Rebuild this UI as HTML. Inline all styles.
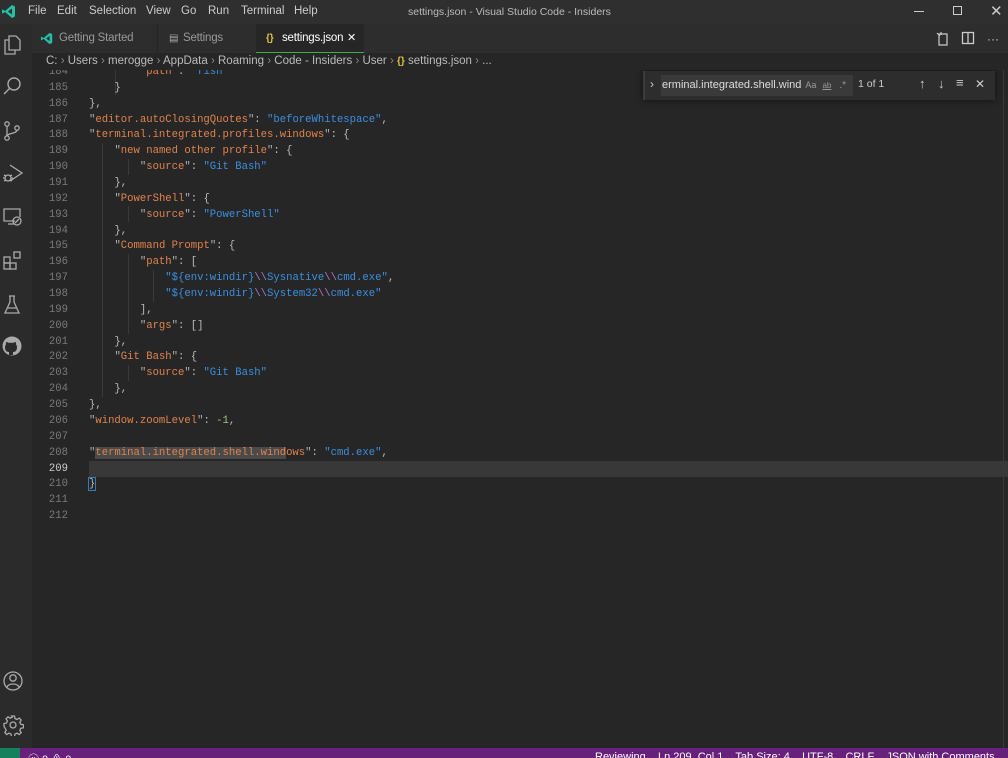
<!DOCTYPE html>
<html><head><meta charset="utf-8"><style>
*{margin:0;padding:0;box-sizing:border-box}
body{width:1008px;height:758px;background:#262626;overflow:hidden;position:relative;font-family:"Liberation Sans",sans-serif;color:#ccc}
.abs{position:absolute}
#title{left:0;top:0;width:1008px;height:24px;background:#2f2f2f;font-size:11.5px}
#title span{position:absolute;top:5px;color:#ccc}
#act{left:0;top:24px;width:32px;height:724px;background:#2b2b2b}
#tabs{left:32px;top:24px;width:976px;height:29px;background:#2d2d2d}
.tab{position:absolute;top:0;height:29px;font-size:11.5px;line-height:29px;background:#2d2d2d;color:#999;letter-spacing:-0.2px}
#bc{left:32px;top:53px;width:976px;height:17px;background:#262626;font-size:11.5px;color:#bbb;line-height:17px;padding-left:14px}
#ed{left:32px;top:70px;width:976px;height:678px;overflow:hidden}
.ln{position:absolute;left:0;width:36px;text-align:right;font-family:"Liberation Mono",monospace;font-size:10.6px;color:#7a7a7a;line-height:16px}
.cl{position:absolute;left:57px;font-family:"Liberation Mono",monospace;font-size:10.6px;color:#bbb;line-height:16px;white-space:pre}
.k{color:#e0834c}.s{color:#3b8fe0}.e{color:#a676c8}.n{color:#9ac77e}.q{color:#b0b0b0}
#status{left:0;top:748px;width:1008px;height:10px;background:#68217a;font-size:11px;color:#fff;overflow:hidden}
svg{position:absolute}
</style></head><body>
<div id="title" class="abs">
<svg style="left:2px;top:4px" width="14" height="15" viewBox="0 0 14 15"><path d="M10 1l3 1.5v10L10 14 3 8 1 9.5 0 9V6l1-.5L3 7l7-6zM10 4.5L6 7.5l4 3z" fill="#24bfa5"/></svg>
<span style="left:28px">File</span><span style="left:57px">Edit</span><span style="left:89px">Selection</span><span style="left:146px">View</span><span style="left:181px">Go</span><span style="left:208px">Run</span><span style="left:241px">Terminal</span><span style="left:294px">Help</span>
<span style="left:408px;font-size:10.5px;top:6px;color:#bbb">settings.json - Visual Studio Code - Insiders</span>
<div class="abs" style="left:914px;top:11px;width:10px;height:1px;background:#ccc"></div>
<div class="abs" style="left:953px;top:6px;width:9px;height:9px;border:1px solid #ccc"></div>
<span style="left:990px;top:2px;font-size:15px">✕</span>
</div>
<div id="act" class="abs">
<svg style="left:2px;top:10px" width="20" height="22" viewBox="0 0 20 22" fill="none" stroke="#aaa" stroke-width="1.3"><path d="M7 2h7l4 4v10H7z"/><path d="M7 6H3v14h10v-4"/></svg>
<svg style="left:2px;top:52px" width="20" height="20" viewBox="0 0 20 20" fill="none" stroke="#aaa" stroke-width="1.4"><circle cx="12" cy="8" r="6"/><path d="M8 12l-6 6"/></svg>
<svg style="left:2px;top:96px" width="20" height="22" viewBox="0 0 20 22" fill="none" stroke="#aaa" stroke-width="1.3"><circle cx="5" cy="4" r="2.2"/><circle cx="5" cy="18" r="2.2"/><circle cx="15" cy="8" r="2.2"/><path d="M5 6v10M15 10c0 4-10 3-10 6"/></svg>
<svg style="left:2px;top:138px" width="22" height="22" viewBox="0 0 22 22" fill="none" stroke="#aaa" stroke-width="1.3"><path d="M8 3l12 8-12 8"/><circle cx="6" cy="16" r="3"/><path d="M2 13l2 1M2 19l2-1M10 13l-2 1M10 19l-2-1M1 16h2M9 16h2"/></svg>
<svg style="left:2px;top:182px" width="22" height="22" viewBox="0 0 22 22" fill="none" stroke="#aaa" stroke-width="1.3"><path d="M13 15H2V3h16v8"/><path d="M6 18h6"/><circle cx="15" cy="15" r="4"/><path d="M13 17l4-4"/></svg>
<svg style="left:2px;top:226px" width="22" height="22" viewBox="0 0 22 22" fill="none" stroke="#aaa" stroke-width="1.3"><rect x="2" y="7" width="6" height="6"/><rect x="2" y="13" width="6" height="6"/><rect x="8" y="13" width="6" height="6"/><rect x="12" y="2" width="6" height="6"/></svg>
<svg style="left:2px;top:270px" width="20" height="22" viewBox="0 0 20 22" fill="none" stroke="#aaa" stroke-width="1.3"><path d="M7 2h6M8 2v6L3 19h14L12 8V2M5 14h10"/></svg>
<svg style="left:1px;top:311px" width="22" height="22" viewBox="0 0 22 22"><circle cx="11" cy="11" r="9.5" fill="#aaa"/><path d="M8 20v-3c-3 0-4-2-4-5 0-1 .5-2 1-2.5-.2-.8 0-2 .3-2.5 1 0 2 .6 2.5 1 1-.3 3.4-.3 4.4 0 .5-.4 1.5-1 2.5-1 .3.5.5 1.7.3 2.5.5.5 1 1.5 1 2.5 0 3-1 5-4 5v3z" fill="#2b2b2b"/></svg>
<svg style="left:2px;top:646px" width="22" height="22" viewBox="0 0 22 22" fill="none" stroke="#aaa" stroke-width="1.3"><circle cx="11" cy="11" r="9"/><circle cx="11" cy="8" r="3.2"/><path d="M5 17c2-4 10-4 12 0"/></svg>
<svg style="left:2px;top:690px" width="22" height="22" viewBox="0 0 22 22" fill="none" stroke="#aaa" stroke-width="1.3"><circle cx="11" cy="11" r="3"/><path d="M9.5 2h3l.5 2.5 2 1 2.2-1.4 2 2-1.4 2.2 1 2 2.7.5v3l-2.7.5-1 2 1.4 2.2-2 2-2.2-1.4-2 1-.5 2.7h-3l-.5-2.7-2-1-2.2 1.4-2-2 1.4-2.2-1-2L2 12.5v-3l2.5-.5 1-2L4 4.8l2-2 2.2 1.4 2-1z"/></svg>
</div>
<div id="tabs" class="abs">
<div class="tab" style="left:0;width:126px;border-right:1px solid #252525"><svg style="left:8px;top:8px" width="14" height="13" viewBox="0 0 14 15"><path d="M10 1l3 1.5v10L10 14 3 8 1 9.5 0 9V6l1-.5L3 7l7-6zM10 4.5L6 7.5l4 3z" fill="#24bfa5"/></svg><span style="position:absolute;left:27px">Getting Started</span></div>
<div class="tab" style="left:126px;width:100px;border-right:1px solid #252525"><span style="position:absolute;left:11px;color:#aaa;font-size:10px">▤</span><span style="position:absolute;left:25px">Settings</span></div>
<div class="tab" style="left:224px;width:108px;background:#262626;border-bottom:1px solid #3fae45;color:#fff"><span style="position:absolute;left:10px;color:#e2c044;font-size:10px;font-weight:bold">{}</span><span style="position:absolute;left:26px">settings.json</span><span style="position:absolute;left:91px;font-size:11px">✕</span></div>
<svg style="left:903px;top:7px" width="16" height="16" viewBox="0 0 16 16" fill="none" stroke="#ccc" stroke-width="1.2"><path d="M4 3h8v11H4zM2 2l3 3M6 1v3"/></svg>
<svg style="left:929px;top:7px" width="14" height="14" viewBox="0 0 14 14" fill="none" stroke="#ccc" stroke-width="1.3"><rect x="1.5" y="1.5" width="11" height="11"/><path d="M7 1.5v11"/></svg>
<span style="position:absolute;left:955px;top:8px;font-size:12px;color:#ccc">···</span>
</div>
<div id="bc" class="abs">C: <span style="color:#888">›</span> Users <span style="color:#888">›</span> merogge <span style="color:#888">›</span> AppData <span style="color:#888">›</span> Roaming <span style="color:#888">›</span> Code - Insiders <span style="color:#888">›</span> User <span style="color:#888">›</span> <span style="color:#e2c044;font-weight:bold;font-size:10px">{}</span> settings.json <span style="color:#888">›</span> ...</div>
<div id="ed" class="abs">
<div class="abs" style="left:57px;top:391px;width:919px;height:16px;background:#383838"></div>
<div class="abs" style="left:83px;top:0;width:1px;height:25px;background:#3a3a3a"></div>
<div class="abs" style="left:70px;top:73px;width:1px;height:254px;background:#3a3a3a"></div>
<div class="abs" style="left:96px;top:89px;width:1px;height:16px;background:#3a3a3a"></div>
<div class="abs" style="left:96px;top:136px;width:1px;height:16px;background:#3a3a3a"></div>
<div class="abs" style="left:96px;top:184px;width:1px;height:80px;background:#3a3a3a"></div>
<div class="abs" style="left:121px;top:200px;width:1px;height:32px;background:#3a3a3a"></div>
<div class="abs" style="left:96px;top:295px;width:1px;height:16px;background:#3a3a3a"></div>
<div class="abs" style="left:971px;top:0;width:1px;height:678px;background:#3a3a3a"></div>
<div class="ln" style="top:-6px">184</div><div class="cl" style="top:-6px">        <span class="q">"</span><span class="k">path</span><span class="q">"</span>: <span class="s">"fish"</span></div>
<div class="ln" style="top:10px">185</div><div class="cl" style="top:10px">    }</div>
<div class="ln" style="top:26px">186</div><div class="cl" style="top:26px">},</div>
<div class="ln" style="top:42px">187</div><div class="cl" style="top:42px"><span class="q">"</span><span class="k">editor.autoClosingQuotes</span><span class="q">"</span>: <span class="s">"beforeWhitespace"</span>,</div>
<div class="ln" style="top:57px">188</div><div class="cl" style="top:57px"><span class="q">"</span><span class="k">terminal.integrated.profiles.windows</span><span class="q">"</span>: {</div>
<div class="ln" style="top:73px">189</div><div class="cl" style="top:73px">    <span class="q">"</span><span class="k">new named other profile</span><span class="q">"</span>: {</div>
<div class="ln" style="top:89px">190</div><div class="cl" style="top:89px">        <span class="q">"</span><span class="k">source</span><span class="q">"</span>: <span class="s">"Git Bash"</span></div>
<div class="ln" style="top:105px">191</div><div class="cl" style="top:105px">    },</div>
<div class="ln" style="top:121px">192</div><div class="cl" style="top:121px">    <span class="q">"</span><span class="k">PowerShell</span><span class="q">"</span>: {</div>
<div class="ln" style="top:137px">193</div><div class="cl" style="top:137px">        <span class="q">"</span><span class="k">source</span><span class="q">"</span>: <span class="s">"PowerShell"</span></div>
<div class="ln" style="top:153px">194</div><div class="cl" style="top:153px">    },</div>
<div class="ln" style="top:168px">195</div><div class="cl" style="top:168px">    <span class="q">"</span><span class="k">Command Prompt</span><span class="q">"</span>: {</div>
<div class="ln" style="top:184px">196</div><div class="cl" style="top:184px">        <span class="q">"</span><span class="k">path</span><span class="q">"</span>: [</div>
<div class="ln" style="top:200px">197</div><div class="cl" style="top:200px">            <span class="s">"${env:windir}<span class="e">\\</span>Sysnative<span class="e">\\</span>cmd.exe"</span>,</div>
<div class="ln" style="top:216px">198</div><div class="cl" style="top:216px">            <span class="s">"${env:windir}<span class="e">\\</span>System32<span class="e">\\</span>cmd.exe"</span></div>
<div class="ln" style="top:232px">199</div><div class="cl" style="top:232px">        ],</div>
<div class="ln" style="top:248px">200</div><div class="cl" style="top:248px">        <span class="q">"</span><span class="k">args</span><span class="q">"</span>: []</div>
<div class="ln" style="top:264px">201</div><div class="cl" style="top:264px">    },</div>
<div class="ln" style="top:279px">202</div><div class="cl" style="top:279px">    <span class="q">"</span><span class="k">Git Bash</span><span class="q">"</span>: {</div>
<div class="ln" style="top:295px">203</div><div class="cl" style="top:295px">        <span class="q">"</span><span class="k">source</span><span class="q">"</span>: <span class="s">"Git Bash"</span></div>
<div class="ln" style="top:311px">204</div><div class="cl" style="top:311px">    },</div>
<div class="ln" style="top:327px">205</div><div class="cl" style="top:327px">},</div>
<div class="ln" style="top:343px">206</div><div class="cl" style="top:343px"><span class="q">"</span><span class="k">window.zoomLevel</span><span class="q">"</span>: <span class="n">-1</span>,</div>
<div class="ln" style="top:359px">207</div>
<div class="ln" style="top:375px">208</div><div class="cl" style="top:375px"><span class="q">"</span><span class="k" style="background:#4a4a4a">terminal.integrated.shell.wind</span><span class="k">ows</span><span class="q">"</span>: <span class="s">"cmd.exe"</span>,</div>
<div class="ln" style="top:391px;color:#ccc">209</div>
<div class="ln" style="top:406px">210</div><div class="cl" style="top:406px"><span style="outline:1px solid #2f7fbf">}</span></div>
<div class="ln" style="top:422px">211</div>
<div class="ln" style="top:438px">212</div>
<div class="abs" style="left:611px;top:1px;width:352px;height:29px;background:#2d2d2d;box-shadow:0 0 6px #111;border-left:2px solid #3c3c3c">
<span style="position:absolute;left:5px;top:6px;font-size:12px;color:#ccc">›</span>
<div class="abs" style="left:16px;top:4px;width:192px;height:21px;background:#3a3a3a;font-size:11px;line-height:21px;color:#ddd;padding-left:1px;white-space:nowrap;overflow:hidden">erminal.integrated.shell.wind<span style="color:#999;font-size:9px;margin-left:4px">Aa</span><span style="color:#999;font-size:8px;margin-left:6px;text-decoration:underline">ab</span><span style="color:#999;font-size:10px;margin-left:8px">.*</span></div>
<span style="position:absolute;left:213px;top:7px;font-size:10.5px;color:#ccc">1 of 1</span>
<span style="position:absolute;left:274px;top:5px;font-size:13px;color:#ccc">↑</span>
<span style="position:absolute;left:293px;top:5px;font-size:13px;color:#ccc">↓</span>
<span style="position:absolute;left:311px;top:4px;font-size:13px;color:#ccc">≡</span>
<span style="position:absolute;left:330px;top:6px;font-size:12px;color:#ccc">✕</span>
</div>
</div>
<div id="status" class="abs"><div class="abs" style="left:0;top:0;width:20px;height:10px;background:#16825d"></div>
<span style="position:absolute;left:28px;top:3px">ⓧ 0 ⚠ 0</span>
<span style="position:absolute;left:595px;top:3px;white-space:nowrap">Reviewing&nbsp;&nbsp;&nbsp; Ln 209, Col 1&nbsp;&nbsp;&nbsp; Tab Size: 4&nbsp;&nbsp;&nbsp; UTF-8&nbsp;&nbsp;&nbsp; CRLF&nbsp;&nbsp;&nbsp; JSON with Comments</span></div>
</body></html>
